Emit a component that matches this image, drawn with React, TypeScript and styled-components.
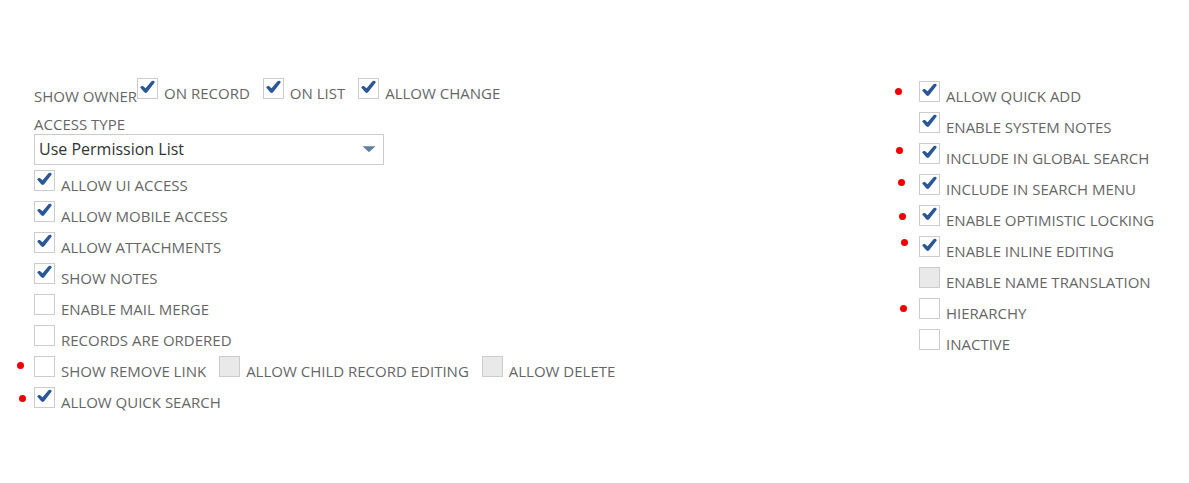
import React from 'react'
import styled, { createGlobalStyle, css } from 'styled-components'

const GlobalStyle = createGlobalStyle`
    html, body {
        margin: 0;
        padding: 0;
        background: #fff;
    }
    body {
        font-family: 'Open Sans', 'Liberation Sans', sans-serif;
    }
`

const Page = styled.div`
    display: flex;
    align-items: flex-start;
    width: 1189px;
    height: 483px;
`

const LeftColumn = styled.div`
    width: 919px;
    padding: 78px 0 0 34px;
    box-sizing: border-box;
`

const RightColumn = styled.div`
    padding-top: 81px;
`

const Row = styled.div`
    position: relative;
    display: flex;
    align-items: flex-start;
    height: 31px;
`

const TopRow = styled(Row)`
    height: 36px;
`

const Field = styled.div`
    display: flex;
    align-items: flex-start;

    & + & {
        margin-left: 13px;
    }
`

const Box = styled.span<{ $disabled?: boolean }>`
    position: relative;
    display: block;
    flex: none;
    width: 21px;
    height: 21px;
    box-sizing: border-box;
    border: 1px solid #cccccc;
    background: #ffffff;

    ${p =>
        p.$disabled &&
        css`
            background: #e9e9e9;
        `}

    svg {
        display: block;
        width: 19px;
        height: 19px;
    }
`

const Label = styled.span`
    margin-left: 6px;
    padding-top: 5px;
    font-size: 15px;
    line-height: 20px;
    color: #666666;
    white-space: nowrap;
    text-transform: uppercase;
`

const OwnerLabel = styled(Label)`
    margin-left: 0;
    padding-top: 8px;
`

const FieldCaption = styled.div`
    font-size: 15px;
    line-height: 20px;
    color: #666666;
    text-transform: uppercase;
`

const Select = styled.div`
    display: flex;
    align-items: center;
    justify-content: space-between;
    width: 350px;
    height: 31px;
    margin-bottom: 5px;
    padding: 0 7px 2px 4px;
    box-sizing: border-box;
    border: 1px solid #cccccc;
    background: #ffffff;
    font-size: 16px;
    line-height: 22px;
    color: #333333;
`

const Marker = styled.span<{ $x: number; $y: number }>`
    position: absolute;
    left: ${p => p.$x}px;
    top: ${p => p.$y}px;
    width: 7px;
    height: 7px;
    border-radius: 50%;
    background: #ee0000;
`

const Check = () => (
    <svg viewBox="0 0 19 19">
        <path
            d="M2.2 8.6 C2.7 7.2 4.2 6.5 5.5 7.4 L7.5 9.2 L13.5 2.3 C14.6 1.2 16.8 1.9 16.7 3.4 L9.3 13 C8.4 14.2 6.8 14.2 6 13.1 Z"
            fill="#2c5797"
        />
    </svg>
)

const Arrow = () => (
    <svg width="14" height="6" viewBox="0 0 14 6">
        <path d="M0.5 0.3 L13.5 0.3 L7.8 5.6 Q7 6.2 6.2 5.6 Z" fill="#617fa2" />
    </svg>
)

interface CheckFieldProps {
    label: string
    checked?: boolean
    disabled?: boolean
}

const CheckField: React.FunctionComponent<CheckFieldProps> = ({ label, checked, disabled }) => (
    <Field>
        <Box $disabled={disabled}>{checked && <Check />}</Box>
        <Label>{label}</Label>
    </Field>
)

interface Option {
    label: string
    checked?: boolean
    disabled?: boolean
    marker?: [number, number]
}

const leftOptions: Option[] = [
    { label: 'Allow UI Access', checked: true },
    { label: 'Allow Mobile Access', checked: true },
    { label: 'Allow Attachments', checked: true },
    { label: 'Show Notes', checked: true },
    { label: 'Enable Mail Merge' },
    { label: 'Records Are Ordered' },
]

const rightOptions: Option[] = [
    { label: 'Allow Quick Add', checked: true, marker: [-24, 7] },
    { label: 'Enable System Notes', checked: true },
    { label: 'Include In Global Search', checked: true, marker: [-23, 4] },
    { label: 'Include In Search Menu', checked: true, marker: [-21, 5] },
    { label: 'Enable Optimistic Locking', checked: true, marker: [-20, 8] },
    { label: 'Enable Inline Editing', checked: true, marker: [-18, 3] },
    { label: 'Enable Name Translation', disabled: true },
    { label: 'Hierarchy', marker: [-19, 7] },
    { label: 'Inactive' },
]

const OptionRow: React.FunctionComponent<{ option: Option }> = ({ option }) => (
    <Row>
        {option.marker && <Marker $x={option.marker[0]} $y={option.marker[1]} />}
        <CheckField label={option.label} checked={option.checked} disabled={option.disabled} />
    </Row>
)

const App: React.FunctionComponent = () => (
    <>
        <GlobalStyle />
        <Page>
            <LeftColumn>
                <TopRow>
                    <OwnerLabel>Show Owner</OwnerLabel>
                    <CheckField label="On Record" checked />
                    <CheckField label="On List" checked />
                    <CheckField label="Allow Change" checked />
                </TopRow>
                <FieldCaption>Access Type</FieldCaption>
                <Select>
                    <span>Use Permission List</span>
                    <Arrow />
                </Select>
                {leftOptions.map(option => (
                    <OptionRow key={option.label} option={option} />
                ))}
                <Row>
                    <Marker $x={-17} $y={6} />
                    <CheckField label="Show Remove Link" />
                    <CheckField label="Allow Child Record Editing" disabled />
                    <CheckField label="Allow Delete" disabled />
                </Row>
                <OptionRow option={{ label: 'Allow Quick Search', checked: true, marker: [-15, 8] }} />
            </LeftColumn>
            <RightColumn>
                {rightOptions.map(option => (
                    <OptionRow key={option.label} option={option} />
                ))}
            </RightColumn>
        </Page>
    </>
)

export default App
